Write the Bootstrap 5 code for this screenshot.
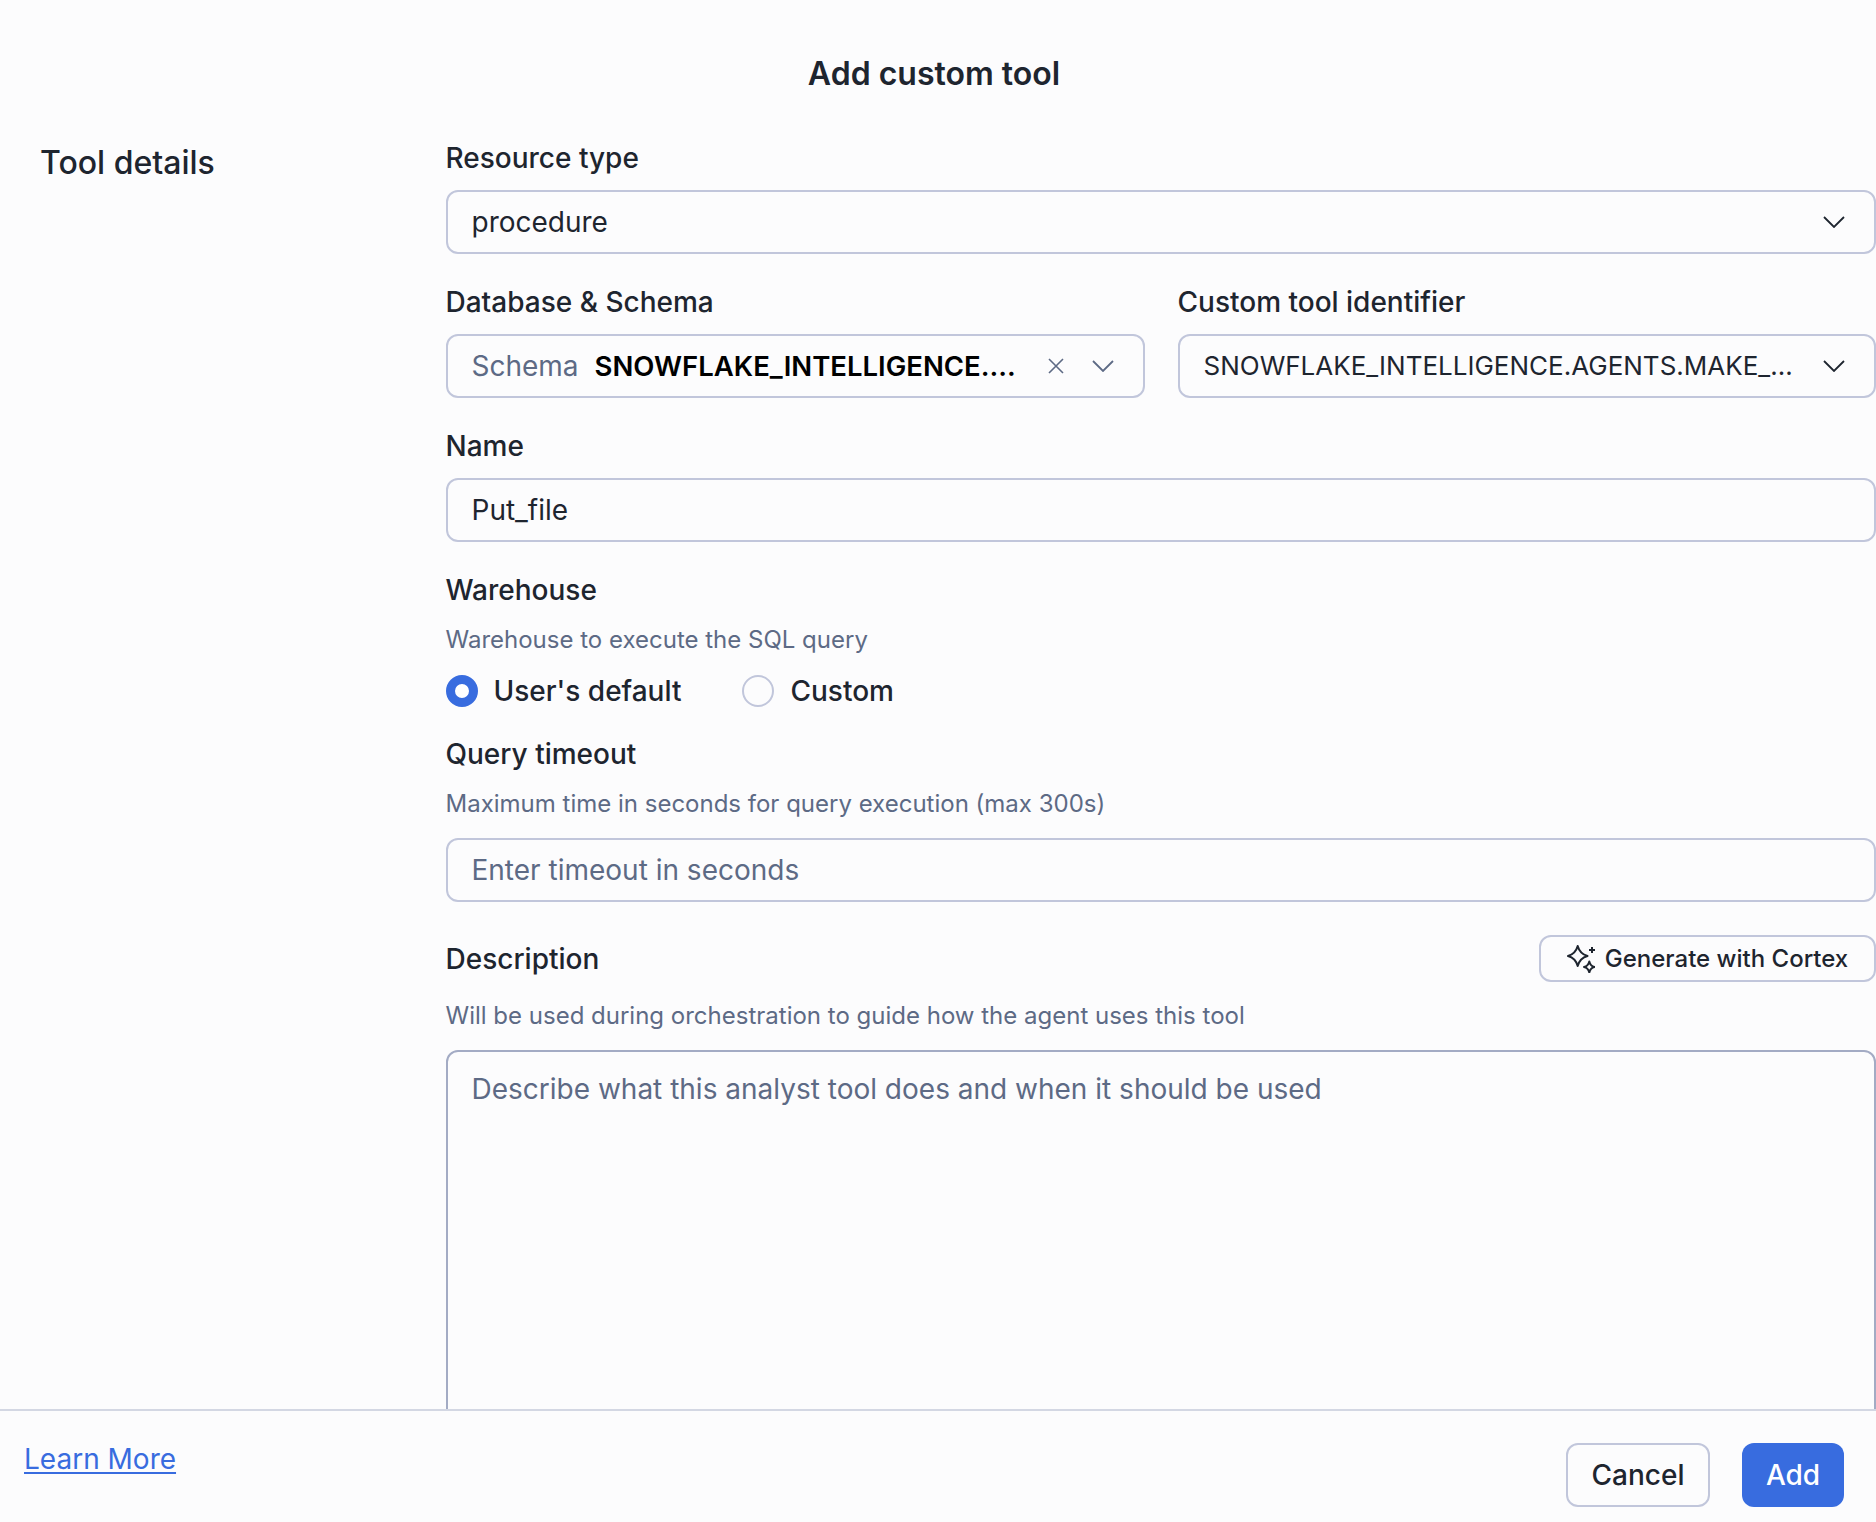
<!DOCTYPE html>
<html>
<head>
  <title>Add custom tool</title>
  <link href="https://cdn.jsdelivr.net/npm/bootstrap@5.3.1/dist/css/bootstrap.min.css" rel="stylesheet">
  <style>
    html, body { height: 100%; }
    body { font-family: "Inter", "Liberation Sans", sans-serif; background: #fcfcfd; color: #1e252f; font-size: 28px; line-height: 36px; overflow: hidden; }
    .page-wrap { height: 1522px; }
    .page-title { font-size: 32px; font-weight: 600; line-height: 40px; margin: 0; padding: 54px 8px 0 0; text-align: center; }
    .form-area { padding: 46px 0 0 40px; min-height: 0; }
    .side-title { width: 405.5px; flex: none; font-size: 32px; font-weight: 500; line-height: 40px; padding-top: 3px; margin: 0; }
    .field-label { font-weight: 500; line-height: 36px; margin: 0 0 14px; display: block; font-size: 28px; }
    .field-gap { margin-bottom: 30px; }
    .hint { font-size: 24px; line-height: 32px; color: #5d6a85; margin: 0; }
    .sf-input { height: 64px; border: 2px solid #c1c6db; border-radius: 12px; background: #fcfcfd; padding: 0 24px; font-size: 28px; color: #1e252f; box-shadow: none; }
    .sf-input::placeholder { color: #5d6a85; opacity: 1; }
    .sf-input:focus { background: #fcfcfd; border-color: #c1c6db; box-shadow: none; }
    .sf-area { height: 500px; padding: 16px 24px; border-color: #a3abc4; resize: none; }
    .schema-key { color: #5d6a85; margin-right: 16px; }
    .schema-val { color: #000; font-weight: 600; font-size: 27.5px; flex: 1; white-space: nowrap; }
    .id-val { flex: 1; white-space: nowrap; }
    .id-small { font-size: 26px; }
    .chev { width: 22px; height: 12px; flex: none; margin-right: 5px; }
    .clear-x { width: 16px; height: 16px; flex: none; margin-right: 27.5px; }
    .sf-radio { width: 32px; height: 32px; margin: 0; border: 2px solid #c1c6db; background-color: #fcfcfd; flex: none; }
    .sf-radio:checked { background-color: #fff; background-image: none; border: 9px solid #386cdf; }
    .sf-radio:focus { box-shadow: none; border-color: #c1c6db; }
    .radio-line { height: 36px; margin: 17px 0 0; }
    .radio-text { margin: 0 61px 0 16px; font-weight: 500; }
    .timeout-block { margin-top: 27px; }
    .desc-block { margin-top: 33px; }
    .label-tight { margin-bottom: 16px; }
    .hint-gap { margin-bottom: 18px; }
    .desc-hint { margin: 18px 0 18px; }
    .gen-btn { width: 337px; height: 47px; padding: 0; gap: 10px; border: 2px solid #c1c6db; border-radius: 12px; background: #fcfcfd; color: #1e252f; font-size: 24px; font-weight: 500; line-height: 1; }
    .gen-btn:hover { background: #fcfcfd; color: #1e252f; border-color: #c1c6db; }
    .foot-bar { height: 113px; flex: none; border-top: 2px solid #d3d7e3; padding: 32px 32px 0 24px; background: #fcfcfd; }
    .learn-link { color: #386cdf; font-size: 28px; line-height: 36px; margin-top: -2px; text-underline-offset: 3px; }
    .foot-btns { gap: 32px; }
    .foot-btn { height: 64px; border-radius: 12px; font-size: 28px; font-weight: 500; padding: 0; line-height: 1; }
    .btn-cancel { width: 144px; border: 2px solid #c1c6db; color: #1e252f; background: #fcfcfd; }
    .btn-add { width: 102px; border: 0; background: #386cdf; color: #fff; }
    .schema-col { width: 699px; margin-right: 33px; }
    .ident-col { width: 698.5px; }
  </style>
</head>
<body>
  <div class="page-wrap d-flex flex-column">
    <h1 class="page-title">Add custom tool</h1>

    <div class="form-area d-flex flex-grow-1 overflow-hidden">
      <h2 class="side-title">Tool details</h2>

      <form class="flex-grow-1">
        <div class="field-gap">
          <label class="field-label">Resource type</label>
          <div class="sf-input d-flex align-items-center">
            <span class="id-val">procedure</span>
            <svg class="chev" viewBox="0 0 22 12" fill="none" stroke="#1e252f" stroke-width="1.8"><path d="M1 1l10 10L21 1"/></svg>
          </div>
        </div>

        <div class="row g-0 field-gap">
          <div class="schema-col">
            <label class="field-label">Database &amp; Schema</label>
            <div class="sf-input d-flex align-items-center">
              <span class="schema-key">Schema</span>
              <span class="schema-val">SNOWFLAKE_INTELLIGENCE....</span>
              <svg class="clear-x" viewBox="0 0 16 16" fill="none" stroke="#5d6a85" stroke-width="1.6"><path d="M1 1l14 14M15 1L1 15"/></svg>
              <svg class="chev" viewBox="0 0 22 12" fill="none" stroke="#5d6a85" stroke-width="1.8"><path d="M1 1l10 10L21 1"/></svg>
            </div>
          </div>
          <div class="ident-col">
            <label class="field-label">Custom tool identifier</label>
            <div class="sf-input d-flex align-items-center">
              <span class="id-val id-small">SNOWFLAKE_INTELLIGENCE.AGENTS.MAKE_...</span>
              <svg class="chev" viewBox="0 0 22 12" fill="none" stroke="#1e252f" stroke-width="1.8"><path d="M1 1l10 10L21 1"/></svg>
            </div>
          </div>
        </div>

        <div class="field-gap">
          <label class="field-label">Name</label>
          <input type="text" class="form-control sf-input" value="Put_file">
        </div>

        <div>
          <label class="field-label label-tight">Warehouse</label>
          <p class="hint">Warehouse to execute the SQL query</p>
          <div class="radio-line d-flex align-items-center">
            <input class="form-check-input sf-radio" type="radio" name="wh" id="whDefault" checked>
            <label class="radio-text" for="whDefault">User's default</label>
            <input class="form-check-input sf-radio" type="radio" name="wh" id="whCustom">
            <label class="radio-text" for="whCustom">Custom</label>
          </div>
        </div>

        <div class="timeout-block">
          <label class="field-label label-tight">Query timeout</label>
          <p class="hint hint-gap">Maximum time in seconds for query execution (max 300s)</p>
          <input type="text" class="form-control sf-input" placeholder="Enter timeout in seconds">
        </div>

        <div class="desc-block">
          <div class="d-flex justify-content-between align-items-center">
            <label class="field-label mb-0">Description</label>
            <button type="button" class="btn gen-btn d-flex align-items-center justify-content-center">
              <svg width="28" height="28" viewBox="0 0 28 28" fill="none" stroke="#1e252f" stroke-width="2" stroke-linejoin="round"><path d="M10.7 1Q12.8 8.8 20.5 11 12.8 13.2 10.7 21 8.6 13.2 1 11 8.6 8.8 10.7 1Z"/><path d="M22.3 16.5Q23.3 21 27.5 22 23.3 23 22.3 27.5 21.3 23 17 22 21.3 21 22.3 16.5Z"/><path d="M25 2v6M22 5h6"/></svg>
              Generate with Cortex
            </button>
          </div>
          <p class="hint desc-hint">Will be used during orchestration to guide how the agent uses this tool</p>
          <textarea class="form-control sf-input sf-area" placeholder="Describe what this analyst tool does and when it should be used"></textarea>
        </div>
      </form>
    </div>

    <div class="foot-bar d-flex justify-content-between align-items-start">
      <a href="#" class="learn-link">Learn More</a>
      <div class="foot-btns d-flex">
        <button type="button" class="btn foot-btn btn-cancel">Cancel</button>
        <button type="button" class="btn foot-btn btn-add">Add</button>
      </div>
    </div>
  </div>
  <script src="https://cdn.jsdelivr.net/npm/bootstrap@5.3.1/dist/js/bootstrap.bundle.min.js"></script>
</body>
</html>
